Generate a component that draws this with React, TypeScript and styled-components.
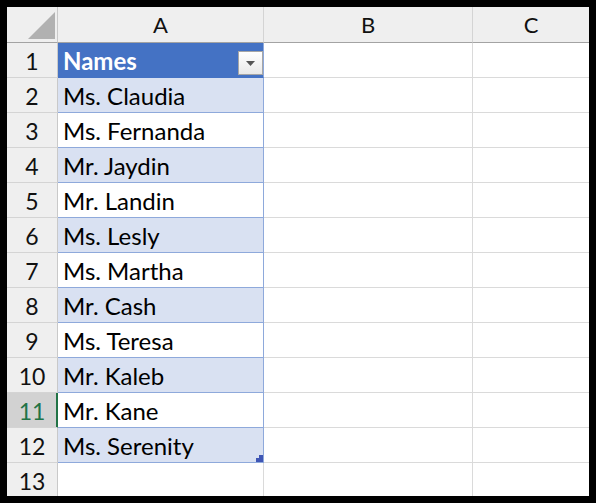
import React from "react";
import styled, { createGlobalStyle, css } from "styled-components";

const Global = createGlobalStyle`
  html, body { margin: 0; padding: 0; background: #000; }
  body { font-family: "Lato", "Liberation Sans", sans-serif; }
`;

const Frame = styled.div`
  width: 596px;
  height: 503px;
  padding: 7px;
  box-sizing: border-box;
  background: #000;
`;

const Sheet = styled.div`
  width: 582px;
  height: 489px;
  overflow: hidden;
  background: #fff;
  display: grid;
  grid-template-columns: 51px 206px 209px 116px;
  grid-template-rows: 36px repeat(13, 35px);
`;

const Corner = styled.div`
  box-sizing: border-box;
  background: #efefef;
  border-right: 1px solid #c9c9c9;
  border-bottom: 1px solid #a3a3a3;
  display: flex;
  align-items: flex-end;
  justify-content: flex-end;
  padding: 0 2px 3px 0;
`;

const ColHead = styled.div<{ $last?: boolean }>`
  box-sizing: border-box;
  background: #efefef;
  border-right: ${(p) => (p.$last ? "none" : "1px solid #d4d4d4")};
  border-bottom: 1px solid #a3a3a3;
  display: flex;
  align-items: center;
  justify-content: center;
  font-size: 22px;
  color: #111;
  padding-bottom: 1px;
`;

const RowHead = styled.div<{ $active?: boolean }>`
  box-sizing: border-box;
  background: ${(p) => (p.$active ? "#d2d2d2" : "#efefef")};
  color: ${(p) => (p.$active ? "#217346" : "#111")};
  border-right: 1px solid ${(p) => (p.$active ? "#217346" : "#c9c9c9")};
  border-bottom: 1px solid #d4d4d4;
  ${(p) =>
    p.$active &&
    css`
      box-shadow: inset -1px 0 0 #217346;
    `}
  display: flex;
  align-items: center;
  justify-content: center;
  font-size: 23px;
  padding-top: 1px;
`;

const TableCell = styled.div<{ $band?: boolean; $header?: boolean }>`
  box-sizing: border-box;
  position: relative;
  background: ${(p) => (p.$header ? "#4472c4" : p.$band ? "#d9e1f2" : "#ffffff")};
  color: ${(p) => (p.$header ? "#ffffff" : "#000")};
  font-weight: ${(p) => (p.$header ? 700 : 400)};
  border-right: 1px solid #8ea9db;
  border-bottom: 1px solid ${(p) => (p.$header ? "#4472c4" : "#8ea9db")};
  display: flex;
  align-items: center;
  justify-content: space-between;
  padding: 1px 0 0 5px;
  font-size: 24px;
  white-space: nowrap;
`;

const Cell = styled.div<{ $last?: boolean }>`
  box-sizing: border-box;
  border-right: ${(p) => (p.$last ? "none" : "1px solid #dadada")};
  border-bottom: 1px solid #dadada;
  background: #fff;
`;

const FilterButton = styled.div`
  box-sizing: border-box;
  width: 25px;
  height: 24px;
  margin: 7px 0 0 0;
  align-self: flex-start;
  border: 1px solid #a6a6a6;
  background: linear-gradient(#ffffff, #e9e9e9);
  display: flex;
  align-items: center;
  justify-content: center;
`;

const Handle = styled.svg`
  position: absolute;
  right: 0;
  bottom: 0;
`;

const names = [
  "Ms. Claudia",
  "Ms. Fernanda",
  "Mr. Jaydin",
  "Mr. Landin",
  "Ms. Lesly",
  "Ms. Martha",
  "Mr. Cash",
  "Ms. Teresa",
  "Mr. Kaleb",
  "Mr. Kane",
  "Ms. Serenity",
];

export default function App() {
  return (
    <>
      <Global />
      <Frame>
        <Sheet>
          <Corner>
            <svg width="27" height="27" viewBox="0 0 27 27">
              <polygon points="27,0 27,27 0,27" fill="#b1b1b1" />
            </svg>
          </Corner>
          <ColHead>A</ColHead>
          <ColHead>B</ColHead>
          <ColHead $last>C</ColHead>

          <RowHead>1</RowHead>
          <TableCell $header>
            Names
            <FilterButton>
              <svg width="9" height="5" viewBox="0 0 9 5">
                <polygon points="0,0 9,0 4.5,5" fill="#555" />
              </svg>
            </FilterButton>
          </TableCell>
          <Cell />
          <Cell $last />

          {names.map((n, i) => {
            const row = i + 2;
            return (
              <React.Fragment key={n}>
                <RowHead $active={row === 11}>{row}</RowHead>
                <TableCell $band={row % 2 === 0}>
                  {n}
                  {row === 12 && (
                    <Handle width="7" height="7" viewBox="0 0 7 7">
                      <path d="M3 0H7V7H0V3H3Z" fill="#3f56b5" />
                    </Handle>
                  )}
                </TableCell>
                <Cell />
                <Cell $last />
              </React.Fragment>
            );
          })}

          <RowHead>13</RowHead>
          <Cell />
          <Cell />
          <Cell $last />
        </Sheet>
      </Frame>
    </>
  );
}
